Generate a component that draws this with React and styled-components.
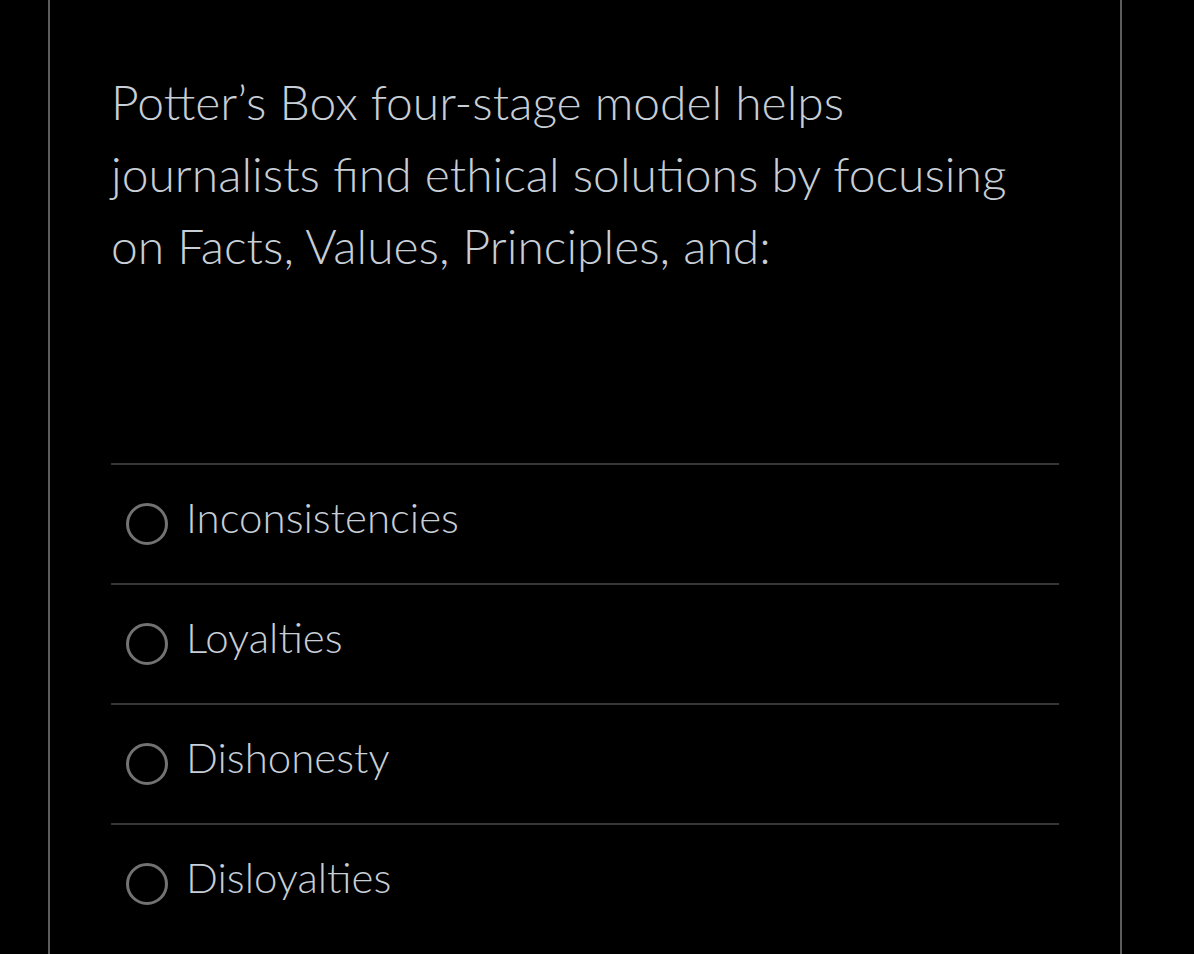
import React from "react";
import styled, { createGlobalStyle } from "styled-components";

const colors = {
  bg: "#000000",
  frame: "#5c5c5c",
  rule: "#363636",
  text: "#c7ced6",
  radio: "#727272"
};

const GlobalStyle = createGlobalStyle`
  html, body {
    margin: 0;
    padding: 0;
    background: ${colors.bg};
  }
`;

const Frame = styled.div`
  box-sizing: border-box;
  min-height: 954px;
  margin: 0 72px 0 48px;
  padding: 66px 61px 0 61px;
  border-left: 2px solid ${colors.frame};
  border-right: 2px solid ${colors.frame};
  font-family: Lato, "Liberation Sans", sans-serif;
  color: ${colors.text};
`;

const Question = styled.div`
  font-size: 48px;
  font-weight: 300;
  line-height: 72px;
`;

const Options = styled.ul`
  list-style: none;
  margin: 181px 0 0 0;
  padding: 0;
`;

const Option = styled.li`
  box-sizing: border-box;
  height: 120px;
  display: flex;
  align-items: center;
  gap: 18px;
  padding-left: 15px;
  border-top: 2px solid ${colors.rule};
`;

const Radio = styled.span`
  box-sizing: border-box;
  flex: none;
  width: 42px;
  height: 42px;
  border-radius: 50%;
  border: 3.5px solid ${colors.radio};
`;

const Label = styled.span`
  font-size: 42px;
  font-weight: 300;
  line-height: 1.2;
  margin-top: -14px;
`;

const answers = ["Inconsistencies", "Loyalties", "Dishonesty", "Disloyalties"];

function App() {
  return (
    <>
      <GlobalStyle />
      <Frame>
        <Question>
          Potter’s Box four-stage model helps journalists find ethical
          solutions by focusing on Facts, Values, Principles, and:
        </Question>
        <Options>
          {answers.map(answer => (
            <Option key={answer}>
              <Radio />
              <Label>{answer}</Label>
            </Option>
          ))}
        </Options>
      </Frame>
    </>
  );
}

export default App;
